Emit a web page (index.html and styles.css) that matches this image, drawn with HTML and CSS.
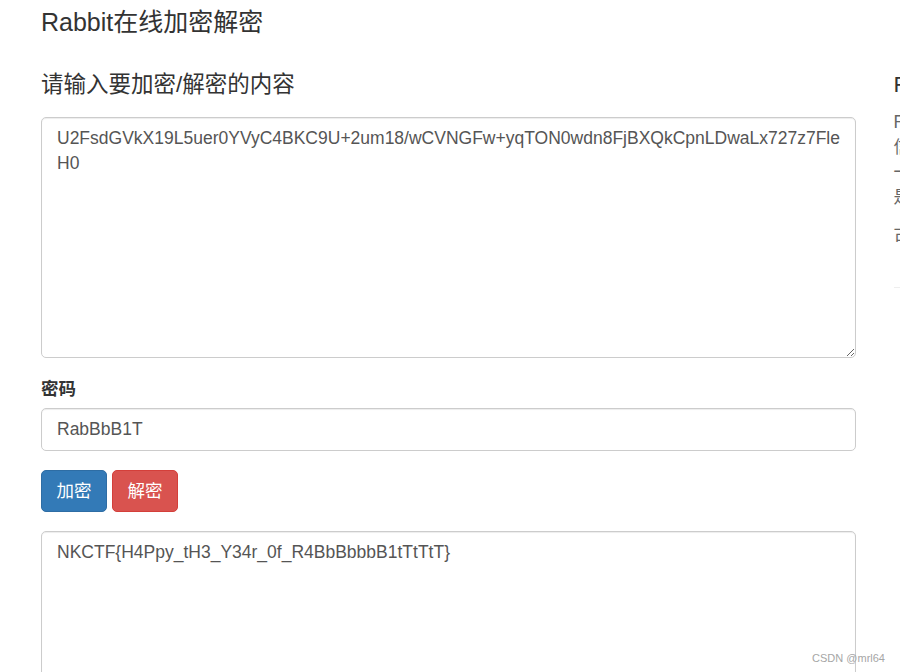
FILE: index.html
```html
<!DOCTYPE html>
<html>
<head>
    <meta charset="utf-8">
    <title>Rabbit在线加密解密</title>
    <meta name="viewport" content="width=device-width, initial-scale=1.0">
    <link rel="stylesheet" href="styles.css">
</head>
<body>
    <div class="page">
        <div class="main">
            <h3 class="title">Rabbit在线加密解密</h3>
            <h4 class="subtitle">请输入要加密/解密的内容</h4>

            <!-- Input -->
            <textarea class="form-control box" id="source">U2FsdGVkX19L5uer0YVyC4BKC9U+2um18/wCVNGFw+yqTON0wdn8FjBXQkCpnLDwaLx727z7FleH0</textarea>

            <div class="form-group">
                <label for="pwd">密码</label>
                <input type="text" class="form-control" id="pwd" value="RabBbB1T">
            </div>

            <div class="actions">
                <button class="btn btn-primary">加密</button>
                <button class="btn btn-danger">解密</button>
            </div>

            <!-- Output -->
            <textarea class="form-control box" id="result">NKCTF{H4Ppy_tH3_Y34r_0f_R4BbBbbbB1tTtTtT}</textarea>
        </div>

        <div class="side">
            <h4 class="side-title">Rabbit加密算法</h4>
            <p class="side-text">
                <span>Rabbit流密码是一种高速的对称</span>
                <span>信息加密算法，它的密钥长度为</span>
                <span>一百二十八位，初始化向量为</span>
                <span>是六十四位，可以快速加密数据。</span>
            </p>
            <p class="side-text">
                <span>古典密码与现代密码的区别</span>
            </p>
            <hr class="side-line">
        </div>
    </div>

    <div class="watermark">CSDN @mrl64</div>
</body>
</html>
```

FILE: styles.css
```css
html, body {
    overflow: hidden;
}

body {
    margin: 0;
    font-family: "Liberation Sans", Arial, "Noto Sans CJK SC", sans-serif;
    font-size: 17.5px;
    line-height: 25px;
    color: #333;
    background: #fff;
}

.page {
    display: flex;
    padding-left: 41px;
    width: 1200px;
}

.main {
    width: 815px;
    flex: none;
}

.title {
    margin: 9px 0 0;
    font-size: 25px;
    font-weight: normal;
    line-height: 26px;
}

.subtitle {
    margin: 37px 0 19px;
    font-size: 22.5px;
    font-weight: normal;
    line-height: 26px;
}

.form-control {
    display: block;
    box-sizing: border-box;
    width: 100%;
    margin: 0;
    padding: 7.5px 13px 7.5px 15px;
    font-family: inherit;
    font-size: 17.5px;
    line-height: 25px;
    color: #555;
    background: #fff;
    border: 1px solid #ccc;
    border-radius: 5px;
    box-shadow: inset 0 1px 1px rgba(0,0,0,0.075);
    outline: none;
}

.box {
    height: 241px;
    resize: vertical;
}

.form-group {
    margin-top: 18.75px;
}

.form-group label {
    display: block;
    margin-bottom: 6.25px;
    font-weight: bold;
}

input.form-control {
    height: 42.5px;
}

.actions {
    display: flex;
    gap: 5px;
    margin: 19.5px 0 19px;
}

.btn {
    padding: 7.5px 14.5px;
    font-family: inherit;
    font-size: 17.5px;
    line-height: 25px;
    color: #fff;
    border: 1px solid transparent;
    border-radius: 5px;
}

.btn-primary {
    background: #337ab7;
    border-color: #2e6da4;
}

.btn-danger {
    background: #d9534f;
    border-color: #d43f3a;
}

.side {
    margin-left: 37.5px;
    width: 300px;
    flex: none;
}

.side-title {
    margin: 72px 0 11.5px;
    font-size: 22.5px;
    font-weight: normal;
    line-height: 26px;
    color: #333;
}

.side-text {
    margin: 0 0 12.5px;
    color: #666;
}

.side-text span {
    display: block;
}

.side-line {
    margin: 40px 0 0;
    border: 0;
    border-top: 1px solid #eee;
}

.watermark {
    position: absolute;
    right: 15px;
    top: 651px;
    font-size: 11px;
    line-height: 14px;
    color: #a6a6a6;
}
```
